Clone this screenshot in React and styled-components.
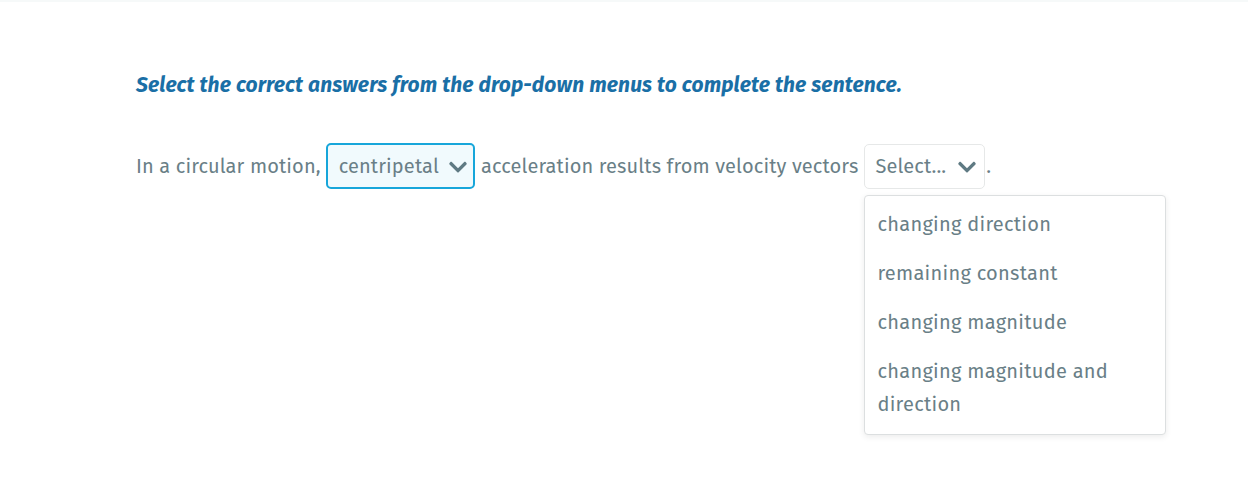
import React from "react";
import styled, { createGlobalStyle } from "styled-components";

const Global = createGlobalStyle`
  html, body { margin: 0; padding: 0; background: #fff; }
  body { font-family: "Fira Sans", Roboto, "Noto Sans", sans-serif; }
`;

const Page = styled.div`
  width: 1248px;
  height: 499px;
  box-sizing: border-box;
  border-top: 2px solid #f6f9f9;
  padding: 68px 0 0 136px;
  color: #6a7f87;
`;

const Instruction = styled.h2`
  margin: 0;
  font-size: 21px;
  line-height: 30px;
  font-weight: 700;
  font-style: italic;
  letter-spacing: 0.15px;
  color: #1a6fa6;
`;

const Sentence = styled.div`
  margin-top: 43px;
  display: flex;
  align-items: center;
  font-size: 20px;
  line-height: 30px;
  letter-spacing: 0.13px;
  color: #6a7f87;
`;

const Words = styled.span`
  white-space: nowrap;
`;

const SelectWrap = styled.div`
  position: relative;
  margin: 0 ${(p) => p.$mr}px 0 ${(p) => p.$ml}px;
`;

const SelectBox = styled.div`
  box-sizing: border-box;
  height: ${(p) => (p.$active ? 46 : 45)}px;
  display: flex;
  align-items: center;
  gap: ${(p) => (p.$active ? 10 : 12)}px;
  padding: 0 ${(p) => (p.$active ? 6 : 8)}px 0 ${(p) => (p.$active ? 11 : 10)}px;
  border: ${(p) => (p.$active ? "2px solid #17a6da" : "1px solid #e6e8e8")};
  border-radius: 5px;
  background: ${(p) => (p.$active ? "#f1fafd" : "#fff")};
  color: #6a7f87;
  white-space: nowrap;
`;

const Chevron = styled.svg`
  width: 18px;
  height: 14px;
  fill: #5f7a83;
  flex: none;
`;

const Menu = styled.ul`
  position: absolute;
  top: 51px;
  left: 0;
  width: 302px;
  box-sizing: border-box;
  margin: 0;
  padding: 4px 0 5px;
  list-style: none;
  background: #fff;
  border: 1px solid #dcdfe0;
  border-radius: 4px;
  box-shadow: 0 2px 6px rgba(0, 0, 0, 0.08);
`;

const Option = styled.li`
  padding: 8px 12px;
  font-size: 20px;
  line-height: 33px;
  letter-spacing: 0.28px;
  color: #6a7f87;
`;

const ChevronDown = () => (
  <Chevron viewBox="0 0 448 350">
    <path d="M207 330L12 135c-9-9-9-25 0-34l23-23c9-9 24-9 34 0l155 154L379 78c9-9 25-9 34 0l23 23c9 9 9 25 0 34L241 330c-9 9-25 9-34 0z" />
  </Chevron>
);

const options = [
  "changing direction",
  "remaining constant",
  "changing magnitude",
  "changing magnitude and direction",
];

export default function App() {
  return (
    <>
      <Global />
      <Page>
        <Instruction>
          Select the correct answers from the drop-down menus to complete the sentence.
        </Instruction>
        <Sentence>
          <Words>In a circular motion,</Words>
          <SelectWrap $ml={5} $mr={6}>
            <SelectBox $active>
              centripetal
              <ChevronDown />
            </SelectBox>
          </SelectWrap>
          <Words>acceleration results from velocity vectors</Words>
          <SelectWrap $ml={6} $mr={1}>
            <SelectBox>
              Select...
              <ChevronDown />
            </SelectBox>
            <Menu>
              {options.map((o) => (
                <Option key={o}>{o}</Option>
              ))}
            </Menu>
          </SelectWrap>
          <Words>.</Words>
        </Sentence>
      </Page>
    </>
  );
}
